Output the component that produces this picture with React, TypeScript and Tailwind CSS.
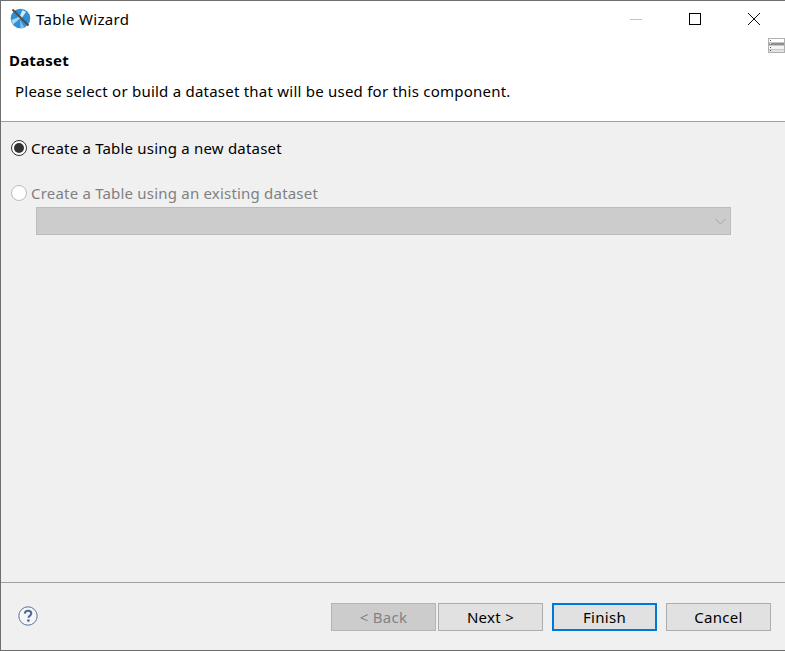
import React from 'react';

function WizardButton({
  label,
  disabled,
  focused,
  className = '',
}: {
  label: string;
  disabled?: boolean;
  focused?: boolean;
  className?: string;
}) {
  const tone = disabled
    ? 'border-[#b4b4b4] bg-[#cccccc] text-[#838383]'
    : focused
      ? 'border-[#0078d7] bg-[#e1e1e1] text-black'
      : 'border-[#adadad] bg-[#e1e1e1] text-black';
  return (
    <div
      className={`flex h-[28px] w-[105px] items-center justify-center text-[15px] tracking-[0.3px] ${
        focused ? 'border-2' : 'border'
      } ${tone} ${className}`}
    >
      {label}
    </div>
  );
}

function AppIcon() {
  return (
    <svg width="21" height="21" viewBox="0 0 21 21" className="shrink-0">
      <circle cx="10.5" cy="10.5" r="9.8" fill="#2f8fd8" />
      <path d="M1.5 12 L10 8.5 L9.5 11 L3 16.5 Z" fill="#a8d6f3" />
      <path d="M10 12 L14.5 19.5 L10.5 20.5 Z" fill="#7fc0ea" />
      <path d="M12.5 2 L9 10 L11 11 L16 4 Z" fill="#d4ebf9" />
      <path d="M2.5 1.5 L18.5 17.5" stroke="#4a4f55" strokeWidth="2" />
    </svg>
  );
}

function ViewMenuRow({ bar, dot }: { bar: string; dot: string }) {
  return (
    <div className={`flex h-[3px] items-center pl-px ${bar}`}>
      <div className={`h-px w-px ${dot}`} />
    </div>
  );
}

function ViewMenuIcon() {
  return (
    <div className="absolute top-[37px] left-[767px] flex h-[15px] w-[17px] flex-col gap-px border border-[#b0b0b0] bg-[#c8c8c8]">
      <ViewMenuRow bar="bg-white" dot="bg-[#555555]" />
      <ViewMenuRow bar="bg-[#8e8e8e]" dot="bg-white" />
      <ViewMenuRow bar="bg-[#f4f4f4]" dot="bg-[#555555]" />
      <ViewMenuRow bar="bg-[#e2e2e2]" dot="bg-[#555555]" />
    </div>
  );
}

export default function App() {
  return (
    <div
      className="relative flex h-[651px] w-[785px] flex-col overflow-hidden border-t border-b border-l border-[#6f6f6f] bg-[#f0f0f0] text-[15px] leading-[20px] tracking-[0.2px] text-black"
      style={{ fontFamily: '"Noto Sans", "Open Sans", sans-serif' }}
    >
      <div className="flex h-[121px] flex-col border-b border-[#a0a0a0] bg-white">
        {/* title bar */}
        <div className="flex h-[35px] items-center pl-[9px]">
          <AppIcon />
          <span className="ml-[5px] tracking-[0.33px]">Table Wizard</span>
          <div className="ml-auto flex items-center">
            <div className="mr-[47px] mt-px h-px w-[12px] bg-[#c4c4c4]" />
            <div className="mr-[46px] h-[12px] w-[12px] border-[1.5px] border-black" />
            <svg width="14" height="14" viewBox="0 0 14 14" className="mr-[24px]">
              <path d="M1 1 L13 13 M13 1 L1 13" stroke="#111" strokeWidth="1" />
            </svg>
          </div>
        </div>
        <div className="pl-[8px] pt-[14px] font-bold">Dataset</div>
        <div className="pl-[14px] pt-[11px] tracking-[0.23px]">
          Please select or build a dataset that will be used for this component.
        </div>
      </div>

      {/* body */}
      <div className="flex flex-1 flex-col pl-[10px] pt-[16px]">
        <div className="flex h-[20px] items-center">
          <div className="flex h-[16px] w-[16px] items-center justify-center rounded-full border border-[#333333] bg-white">
            <div className="h-[10px] w-[10px] rounded-full bg-[#333333]" />
          </div>
          <span className="ml-[4px]">Create a Table using a new dataset</span>
        </div>
        <div className="mt-[25px] flex h-[20px] items-center">
          <div className="h-[16px] w-[16px] rounded-full border border-[#bcbcbc] bg-white" />
          <span className="ml-[4px] text-[#808080]">
            Create a Table using an existing dataset
          </span>
        </div>
        <div className="mt-[4px] ml-[25px] flex h-[28px] w-[695px] items-center justify-end border border-[#bcbcbc] bg-[#cccccc] pr-[4px]">
          <svg width="11" height="7" viewBox="0 0 11 7">
            <path d="M0.5 1 L5.5 6 L10.5 1" fill="none" stroke="#a4a4a4" strokeWidth="1" />
          </svg>
        </div>
      </div>

      {/* footer */}
      <div className="flex h-[68px] border-t border-[#a0a0a0]">
        <div className="flex w-full items-start pt-[20px]">
          <svg width="20" height="20" viewBox="0 0 20 20" className="ml-[17px] mt-[3px]">
            <circle cx="10" cy="10" r="9.2" fill="#f6f6f8" stroke="#5a7399" strokeWidth="1" />
            <path
              d="M6.8 7.6 C7 5.6 8.4 4.8 10.1 4.8 C12 4.8 13.3 5.9 13.3 7.4 C13.3 9.6 10.5 9.6 10.5 11.8"
              fill="none"
              stroke="#4e6a94"
              strokeWidth="2"
            />
            <circle cx="10.4" cy="14.6" r="1.3" fill="#4e6a94" />
          </svg>
          <div className="ml-[293px] flex">
            <WizardButton label="< Back" disabled />
            <WizardButton label="Next >" className="ml-[2px]" />
            <WizardButton label="Finish" focused className="ml-[9px]" />
            <WizardButton label="Cancel" className="ml-[9px]" />
          </div>
        </div>
      </div>

      <ViewMenuIcon />
    </div>
  );
}
